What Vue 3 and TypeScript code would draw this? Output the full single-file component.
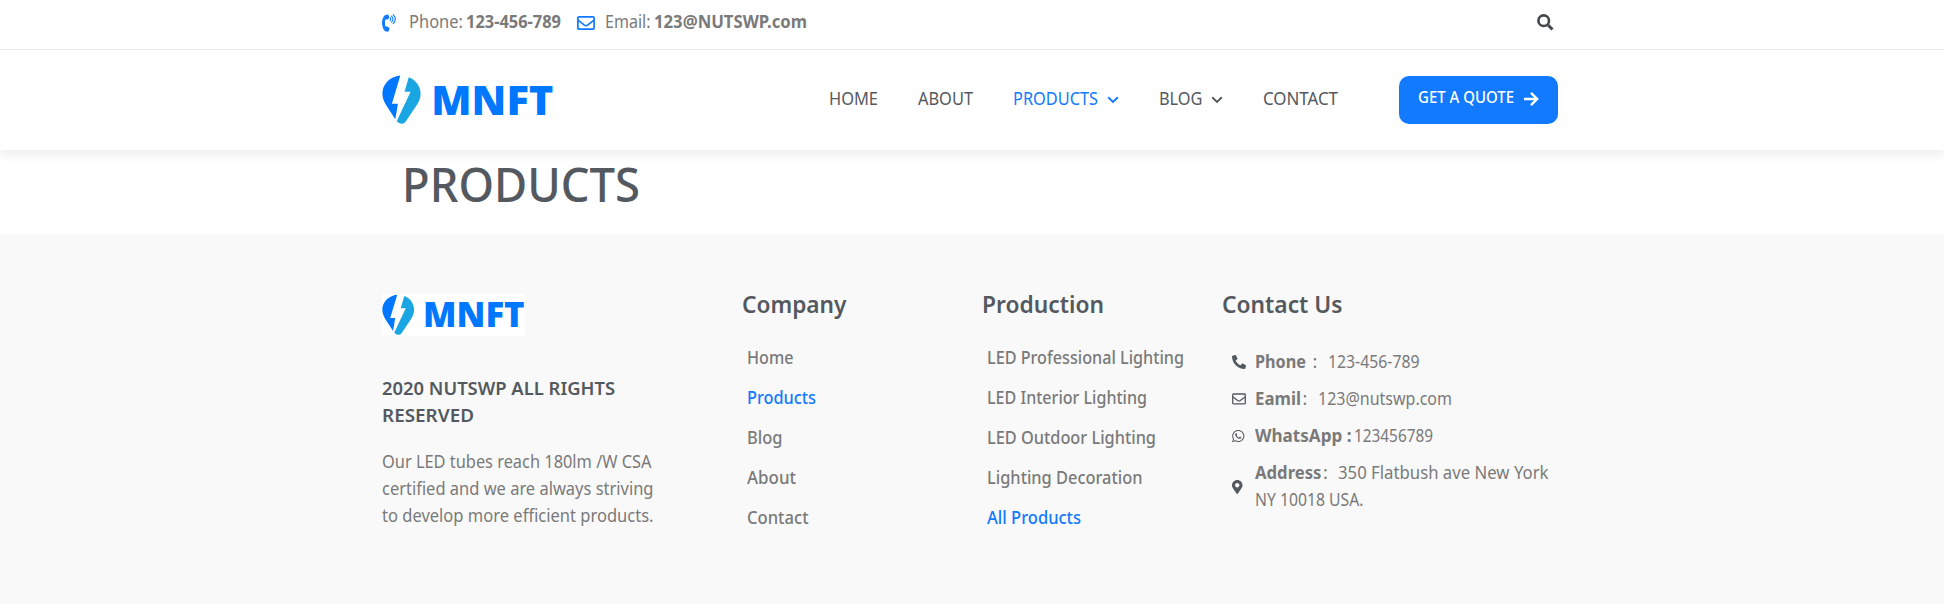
<script setup lang="ts">
import type { Directive } from 'vue'

interface Label {
  text: string
  width: number
  active?: boolean
  menu?: boolean
}

// Condenses a single-line label horizontally so that it occupies the given width.
const vFit: Directive<HTMLElement, number> = {
  mounted(el, { value }) {
    const natural = el.getBoundingClientRect().width
    el.style.transform = `scaleX(${value / natural})`
    el.style.marginRight = `${value - natural}px`
  },
}

const nav: Label[] = [
  { text: 'HOME', width: 49 },
  { text: 'ABOUT', width: 55 },
  { text: 'PRODUCTS', width: 85, active: true, menu: true },
  { text: 'BLOG', width: 43.5, menu: true },
  { text: 'CONTACT', width: 75 },
]

const groups: { title: string; width: number; links: Label[] }[] = [
  {
    title: 'Company',
    width: 104.5,
    links: [
      { text: 'Home', width: 46.5 },
      { text: 'Products', width: 69 },
      { text: 'Blog', width: 35.5 },
      { text: 'About', width: 49 },
      { text: 'Contact', width: 61.5 },
    ],
  },
  {
    title: 'Production',
    width: 122,
    links: [
      { text: 'LED Professional Lighting', width: 197 },
      { text: 'LED Interior Lighting', width: 160 },
      { text: 'LED Outdoor Lighting', width: 169 },
      { text: 'Lighting Decoration', width: 155.5 },
      { text: 'All Products', width: 94 },
    ],
  },
]
groups[0].links[1].active = true
groups[1].links[4].active = true

const about: Label[] = [
  { text: 'Our LED tubes reach 180lm /W CSA', width: 269.5 },
  { text: 'certified and we are always striving', width: 271.5 },
  { text: 'to develop more efficient products.', width: 271.5 },
]
</script>

<template>
  <div class="page">
    <div class="topbar">
      <div class="wrap topbar-row">
        <svg class="ic-call" viewBox="0 0 14 18">
          <path d="M5.600.6 2.800 1.300C1 3.100 0 6 0 9s1.100 6.300 3 8.300l2.800.5c.5 0 .7-.3.9-.7l.8-2.300c.1-.5 0-.8-.4-1.100L5 12.300l-1.300.5C2.700 10.500 2.700 7.500 3.600 5.300l1.600.4 1.800-1.500c.3-.3.3-.7.2-1L6.500 1.100c-.2-.4-.5-.6-.9-.5Z" fill="currentColor" />
          <path d="M8.200 3.700q1.300 1.400 0 2.900M9.600 2.100q2.700 2.900 0 6M11.200.6q4.200 4.400 0 9" fill="none" stroke="currentColor" stroke-width="1.100" stroke-linecap="round" />
        </svg>
        <span v-fit="54" class="fit phone-label">Phone:</span>
        <b v-fit="95" class="fit">123-456-789</b>
        <svg class="ic-mail" viewBox="0 0 18 14">
          <rect x=".9" y=".9" width="16.200" height="12.200" rx="1" fill="none" stroke="currentColor" stroke-width="1.700" />
          <path d="M1 4.200 7.400 9.100Q9 10.200 10.600 9.100L17 4.200" fill="none" stroke="currentColor" stroke-width="1.700" />
        </svg>
        <span v-fit="45.5" class="fit email-label">Email:</span>
        <b v-fit="153" class="fit">123@NUTSWP.com</b>
        <svg class="ic-search" viewBox="0 0 17 17">
          <circle cx="6.700" cy="6.700" r="5.300" fill="none" stroke="currentColor" stroke-width="2.600" />
          <path d="m11 11 4.500 4.500" stroke="currentColor" stroke-width="3" />
        </svg>
      </div>
    </div>

    <header class="header">
      <div class="wrap header-row">
        <svg class="logo" viewBox="0 0 172 50">
          <path d="M18.300.6C7.500 1.800.4 9.600.4 18.500c0 4.500 1.500 8 3.500 11.300l9.400 14.400 2.600-15.500H9.900Z" fill="#0077ff" />
          <path d="M26.800 2.200C34.300 5.200 38.600 11.500 38.600 18.700c0 4.400-1.600 7.800-3.800 11.300L23.700 46.600c-1.900 3-6.300 3.200-8.900-.5L28.600 16.800H22.500Z" fill="#19a6e3" />
          <text x="49.300" y="39.700" textLength="122.200" lengthAdjust="spacingAndGlyphs">MNFT</text>
        </svg>
        <nav class="nav">
          <a v-for="item in nav" :key="item.text" class="nav-link" :class="{ active: item.active }">
            <span v-fit="item.width" class="fit">{{ item.text }}</span>
            <svg v-if="item.menu" class="chevron" viewBox="0 0 12 8">
              <path d="m1.200 1.300 4.800 4.700 4.800-4.700" fill="none" stroke="currentColor" stroke-width="1.900" />
            </svg>
          </a>
        </nav>
        <a class="quote">
          <span v-fit="96" class="fit">GET A QUOTE</span>
          <svg class="arrow" viewBox="0 0 15 14">
            <path d="M0 7h13M7 .9 13.100 7 7 13.100" fill="none" stroke="currentColor" stroke-width="2.400" />
          </svg>
        </a>
      </div>
    </header>

    <main class="wrap main">
      <h1><span v-fit="238" class="fit">PRODUCTS</span></h1>
    </main>

    <footer class="footer">
      <div class="wrap footer-grid">
        <section class="brand">
          <svg class="logo-small" viewBox="0 0 172 50">
            <path d="M18.300.6C7.500 1.800.4 9.600.4 18.500c0 4.500 1.500 8 3.500 11.300l9.400 14.400 2.600-15.500H9.900Z" fill="#0077ff" />
            <path d="M26.800 2.200C34.300 5.200 38.600 11.500 38.600 18.700c0 4.400-1.600 7.800-3.800 11.300L23.700 46.600c-1.900 3-6.300 3.200-8.900-.5L28.600 16.800H22.500Z" fill="#19a6e3" />
            <text x="49.300" y="39.700" textLength="122.200" lengthAdjust="spacingAndGlyphs">MNFT</text>
          </svg>
          <h4>
            <span v-fit="233" class="fit">2020 NUTSWP ALL RIGHTS</span><br />
            <span v-fit="92" class="fit">RESERVED</span>
          </h4>
          <p>
            <template v-for="line in about" :key="line.text">
              <span v-fit="line.width" class="fit">{{ line.text }}</span><br />
            </template>
          </p>
        </section>

        <section v-for="group in groups" :key="group.title" class="group">
          <h3><span v-fit="group.width" class="fit">{{ group.title }}</span></h3>
          <ul class="links">
            <li v-for="link in group.links" :key="link.text" :class="{ active: link.active }">
              <span v-fit="link.width" class="fit">{{ link.text }}</span>
            </li>
          </ul>
        </section>

        <section class="group">
          <h3><span v-fit="120.5" class="fit">Contact Us</span></h3>
          <ul class="contacts">
            <li>
              <svg viewBox="0 0 512 512"><path fill="currentColor" d="M493.400 24.600l-104-24c-11.300-2.600-22.900 3.300-27.500 13.900l-48 112c-4.200 9.800-1.400 21.300 6.900 28l60.600 49.600c-36 76.700-98.900 140.500-177.200 177.200l-49.600-60.600c-6.800-8.300-18.200-11.100-28-6.900l-112 48C3.900 366.500-2 378.100.6 389.400l24 104C27.100 504.200 36.700 512 48 512c256.100 0 464-207.500 464-464 0-11.200-7.700-20.900-18.600-23.400z" transform="matrix(-1 0 0 1 512 0)" /></svg>
              <div class="row"><b v-fit="51" class="fit">Phone</b><i class="colon spaced">:</i><span v-fit="91.5" class="fit">123-456-789</span></div>
            </li>
            <li>
              <svg viewBox="0 0 14 14"><rect x=".7" y="2" width="12.600" height="9.800" rx=".8" fill="none" stroke="currentColor" stroke-width="1.300" /><path d="m1 5 4.700 3.500q1.300.9 2.600 0L13 5" fill="none" stroke="currentColor" stroke-width="1.300" /></svg>
              <div class="row"><b v-fit="46" class="fit">Eamil</b><i class="colon">:</i><span v-fit="134" class="fit">123@nutswp.com</span></div>
            </li>
            <li>
              <svg class="narrow" viewBox="0 0 448 512"><path fill="currentColor" d="M380.900 97.100C339 55.100 283.200 32 223.900 32c-122.400 0-222 99.600-222 222 0 39.100 10.200 77.300 29.600 111L0 480l117.700-30.900c32.400 17.700 68.900 27 106.100 27h.1c122.300 0 224.100-99.600 224.100-222 0-59.300-25.200-115-67.100-157zm-157 341.600c-33.200 0-65.700-8.900-94-25.700l-6.700-4-69.800 18.300L72 359.200l-4.400-7c-18.500-29.400-28.200-63.300-28.200-98.200 0-101.700 82.800-184.500 184.600-184.500 49.300 0 95.600 19.200 130.400 54.100 34.800 34.900 56.200 81.200 56.100 130.500 0 101.800-84.900 184.600-186.600 184.600zm101.200-138.200c-5.500-2.800-32.800-16.200-37.900-18-5.100-1.900-8.800-2.800-12.500 2.800-3.700 5.600-14.300 18-17.600 21.800-3.200 3.700-6.500 4.200-12 1.400-32.600-16.300-54-29.100-75.500-66-5.700-9.800 5.700-9.100 16.300-30.300 1.800-3.700.9-6.900-.5-9.700-1.400-2.800-12.500-30.100-17.100-41.200-4.500-10.800-9.100-9.300-12.500-9.500-3.200-.2-6.900-.2-10.600-.2-3.700 0-9.700 1.400-14.800 6.900-5.100 5.600-19.400 19-19.400 46.300 0 27.300 19.900 53.700 22.600 57.400 2.800 3.700 39.100 59.700 94.800 83.800 35.200 15.200 49 16.500 66.600 13.900 10.700-1.600 32.800-13.400 37.400-26.400 4.600-13 4.600-24.100 3.200-26.400-1.300-2.500-5-3.900-10.500-6.600z" /></svg>
              <div class="row"><b v-fit="96.5" class="fit">WhatsApp :</b><span v-fit="79" class="fit whatsapp-value">123456789</span></div>
            </li>
            <li>
              <svg class="pin" viewBox="0 0 384 512"><path fill="currentColor" fill-rule="evenodd" d="M172.300 501.700C27 291 0 269.400 0 192 0 86 86 0 192 0s192 86 192 192c0 77.400-27 99-172.300 309.700-9.500 13.800-29.900 13.800-39.400 0zM192 272c44.200 0 80-35.800 80-80s-35.800-80-80-80-80 35.800-80 80 35.800 80 80 80z" /></svg>
              <div>
                <div class="row"><b v-fit="66.5" class="fit">Address</b><i class="colon">:</i><span v-fit="210.5" class="fit">350 Flatbush ave New York</span></div>
                <div class="row"><span v-fit="108.5" class="fit">NY 10018 USA.</span></div>
              </div>
            </li>
          </ul>
        </section>
      </div>
    </footer>
  </div>
</template>

<style>
body {
  margin: 0;
  background: #fff;
}
</style>

<style scoped>
.page {
  min-height: 604px;
  font: 400 18px/27px "Noto Sans", "Open Sans", sans-serif;
  color: #7a7a7a;
}
.page svg {
  flex: none;
  display: block;
  overflow: visible;
}
.wrap {
  width: 1180px;
  margin: 0 auto;
}
.fit {
  display: inline-block;
  flex: none;
  white-space: nowrap;
  transform-origin: 0 50%;
}
b {
  font-weight: 700;
}

.topbar {
  height: 49px;
  border-bottom: 1px solid #ebebeb;
}
.topbar-row {
  display: flex;
  line-height: 42px;
}
.topbar-row svg {
  color: #117aff;
}
.ic-call {
  width: 14px;
  height: 18px;
  margin-top: 14px;
}
.phone-label {
  margin-left: 12.500px;
}
.topbar-row b {
  margin-left: 3.500px;
}
.ic-mail {
  width: 18px;
  height: 14px;
  margin: 16px 0 0 16px;
}
.email-label {
  margin-left: 9.500px;
}
.topbar-row .ic-search {
  width: 17px;
  height: 17px;
  margin: 14px 8px 0 auto;
  color: #43474b;
}

.header {
  height: 100px;
  background: #fff;
  box-shadow: 0 5px 10px rgba(0, 0, 0, 0.07);
}
.header-row {
  display: flex;
  align-items: flex-start;
}
.logo {
  width: 172px;
  height: 50px;
  margin-top: 25px;
}
.logo text,
.logo-small text {
  font: 800 41.500px "Open Sans", "Noto Sans", sans-serif;
  fill: #0077ff;
}
.nav {
  display: flex;
  gap: 40px;
  margin-left: 274.500px;
  line-height: 96px;
  color: #54595f;
}
.nav-link {
  display: flex;
}
.active {
  color: #117aff;
}
.chevron {
  width: 12px;
  height: 8px;
  margin: 45.500px 0 0 9px;
}
.quote {
  display: flex;
  box-sizing: border-box;
  width: 159px;
  height: 48px;
  margin: 26px 4px 0 auto;
  padding-left: 19px;
  border-radius: 10px;
  background: #117aff;
  color: #fff;
  font-size: 16px;
  font-weight: 500;
  line-height: 43px;
}
.arrow {
  width: 15px;
  height: 14px;
  margin: 16px 0 0 10px;
}

.main {
  height: 84px;
}
h1 {
  margin: 0;
  padding: 10.500px 0 0 19.500px;
  font-size: 47px;
  font-weight: 500;
  line-height: 47px;
  color: #54595f;
}

.footer {
  height: 370px;
  background: #f9f9f9;
}
.footer-grid {
  display: grid;
  grid-template-columns: 360px 240px 240px 1fr;
}
.brand {
  padding-top: 60px;
}
.logo-small {
  width: 143px;
  height: 42px;
  background: #fff;
}
h4 {
  margin: 37.500px 0 20.500px;
  font-size: 18.500px;
  font-weight: 600;
  line-height: 27px;
  color: #54595f;
}
p {
  margin: 0;
}
h4 .fit,
p .fit {
  vertical-align: top;
}
.group {
  padding-top: 55px;
}
h3 {
  margin: 0 0 18px;
  font-size: 23.500px;
  font-weight: 600;
  line-height: 30px;
  color: #54595f;
}
ul {
  margin: 0;
  padding: 0;
  list-style: none;
}
.links {
  padding-left: 4.500px;
  font-weight: 500;
  line-height: 40px;
}
.links li {
  height: 40px;
}
.contacts {
  display: flex;
  flex-direction: column;
  gap: 10px;
  padding: 10.500px 0 0 10px;
}
.contacts li {
  display: flex;
  align-items: center;
  gap: 8.500px;
}
.contacts svg {
  width: 14px;
  height: 14px;
  margin-top: 2px;
  color: #54595f;
}
.contacts .narrow {
  width: 12.500px;
  margin-right: 1.500px;
}
.contacts .pin {
  width: 10.500px;
  margin-right: 3.500px;
}
.row {
  display: flex;
}
.colon {
  width: 17px;
  padding-left: 2px;
  box-sizing: border-box;
  font-style: normal;
}
.spaced {
  width: 22px;
  padding-left: 7px;
}
.whatsapp-value {
  margin-left: 3px;
}
</style>
